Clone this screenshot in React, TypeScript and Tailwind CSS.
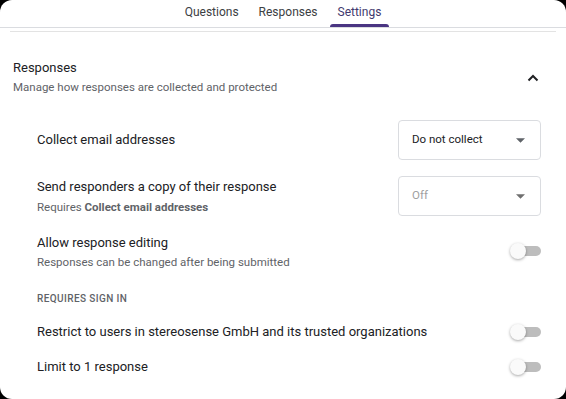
import React from "react";

function Toggle() {
  return (
    <div className="relative w-[31px] h-[16px] flex items-center shrink-0">
      <div className="absolute left-[3px] right-0 h-[10px] rounded-full bg-[#bdbdbd]" />
      <div className="absolute left-0 w-[16px] h-[16px] rounded-full bg-[#fafafa] shadow-[0_1px_3px_rgba(0,0,0,0.35)]" />
    </div>
  );
}

function Select({ label, disabled }: { label: string; disabled?: boolean }) {
  return (
    <div className="w-[143px] h-[40px] shrink-0 border border-[#dadce0] rounded-[4px] flex items-center justify-between pl-[13px] pr-[15px]">
      <span className={disabled ? "text-[11.5px] text-[#a0a0a0]" : "text-[11.5px] text-[#202124]"}>{label}</span>
      <svg width="9" height="5" viewBox="0 0 10 5">
        <path d="M0 0 L5 5 L10 0 Z" fill={disabled ? "#6f6f6f" : "#5f6368"} />
      </svg>
    </div>
  );
}

export default function App() {
  return (
    <div className="w-[566px] h-[399px] bg-black" style={{ fontFamily: "Roboto, 'Liberation Sans', sans-serif" }}>
      <div className="w-full h-full bg-white rounded-[12px] overflow-hidden flex flex-col">
        <div className="h-[28px] border-b border-[#dadce0] flex justify-center items-stretch gap-[4px] shrink-0">
          <div className="px-2 flex items-center text-[12px] text-[#3c4043] pb-[4px]">Questions</div>
          <div className="px-2 flex items-center text-[12px] text-[#3c4043] pb-[4px]">Responses</div>
          <div className="relative px-2 flex items-center text-[12px] text-[#3f3a6e] pb-[4px]">
            Settings
            <div className="absolute left-0 right-0 bottom-0 h-[3px] rounded-t-[3px] bg-[#4a3582]" />
          </div>
        </div>
        <div className="mx-[10px] mt-[3px] border-t border-[#e3e3e3]" />
        <div className="pl-[13px] pr-[25px]">
          <div className="flex items-center justify-between mt-[26px]">
            <div>
              <div className="text-[13px] leading-[20px] text-[#202124]">Responses</div>
              <div className="text-[11.5px] leading-[16px] text-[#5f6368] mt-[1px]">Manage how responses are collected and protected</div>
            </div>
            <svg width="12" height="8" viewBox="0 0 12 8" className="mr-[2px] mt-[2px]">
              <path d="M1.5 6.5 L6 2 L10.5 6.5" fill="none" stroke="#202124" strokeWidth="2" />
            </svg>
          </div>
          <div className="pl-[24px]">
            <div className="flex items-center justify-between mt-[25px]">
              <div className="text-[13px] leading-[20px] text-[#202124]">Collect email addresses</div>
              <Select label="Do not collect" />
            </div>
            <div className="flex items-start justify-between mt-[16px]">
              <div className="pt-[1px]">
                <div className="text-[13px] leading-[20px] text-[#202124]">Send responders a copy of their response</div>
                <div className="text-[11.5px] leading-[16px] text-[#5f6368] mt-[2px]">
                  Requires <span className="font-bold">Collect email addresses</span>
                </div>
              </div>
              <Select label="Off" disabled />
            </div>
            <div className="flex items-center justify-between mt-[16px]">
              <div className="pt-[1px]">
                <div className="text-[13px] leading-[20px] text-[#202124]">Allow response editing</div>
                <div className="text-[11.5px] leading-[16px] text-[#5f6368] mt-[1px]">Responses can be changed after being submitted</div>
              </div>
              <Toggle />
            </div>
            <div className="mt-[21px] text-[10px] leading-[16px] font-medium tracking-[0.4px] text-[#5f6368]">REQUIRES SIGN IN</div>
            <div className="flex items-center justify-between mt-[15px] h-[20px]">
              <div className="text-[13px] leading-[20px] text-[#202124]">Restrict to users in stereosense GmbH and its trusted organizations</div>
              <Toggle />
            </div>
            <div className="flex items-center justify-between mt-[15px] h-[20px]">
              <div className="text-[13px] leading-[20px] text-[#202124]">Limit to 1 response</div>
              <Toggle />
            </div>
          </div>
        </div>
      </div>
    </div>
  );
}
